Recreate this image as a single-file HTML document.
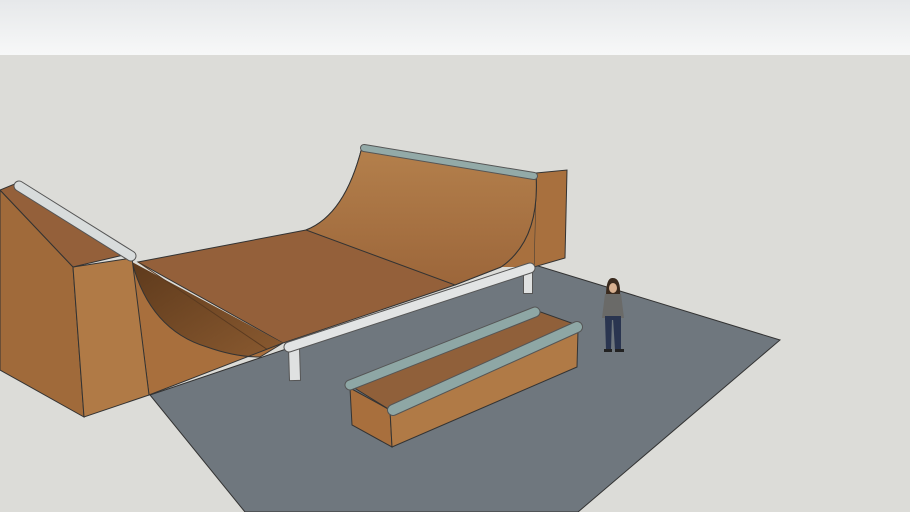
<html><head><style>body{margin:0;width:910px;height:512px;overflow:hidden}</style></head><body>
<svg width="910" height="512" viewBox="0 0 910 512" xmlns="http://www.w3.org/2000/svg">
<defs>
<linearGradient id="sky" x1="0" y1="0" x2="0" y2="1"><stop offset="0" stop-color="#e6e8ea"/><stop offset="1" stop-color="#f7f8f8"/></linearGradient>
<linearGradient id="lc" x1="0" y1="0" x2="1" y2="1"><stop offset="0" stop-color="#5e3a1c"/><stop offset="1" stop-color="#8a5a30"/></linearGradient>
<linearGradient id="rc" x1="0" y1="0" x2="0" y2="1"><stop offset="0" stop-color="#b4804c"/><stop offset="1" stop-color="#9c663a"/></linearGradient>
</defs>
<rect width="910" height="55" fill="url(#sky)"/>
<rect y="55" width="910" height="457" fill="#dcdcd8"/>
<polygon points="150,395 535,265 780,340 578,512 245,512" fill="#6f777e" stroke="#333" stroke-width="1"/>
<!-- back tower -->
<polygon points="536,173 567,170 565,258 534,267" fill="#a8703e" stroke="#333" stroke-width="1"/>
<!-- right side panel under curve -->
<path d="M536,175 L534,267 L501,267 Q540,240 536,175 Z" fill="#a8703e"/>
<!-- ramp floor + transitions -->
<path d="M138,262 L306,230 Q345,215 362,147 L536,175 Q540,240 501,267 L455,285 L283,343 Z" fill="#94603a" stroke="#333" stroke-width="1"/>
<path d="M306,230 Q345,215 362,147 L536,175 Q540,240 501,267 L455,285 Z" fill="url(#rc)" stroke="#333" stroke-width="1"/>
<path d="M132,262 Q150,330 207,347 Q235,357 260,357 L283,343 Z" fill="url(#lc)"/>
<line x1="138" y1="262" x2="268" y2="350" stroke="#5a3a20" stroke-width="1"/>
<!-- side panel -->
<path d="M132,262 Q150,330 207,347 Q235,357 260,357 L283,343 L149,395 Z" fill="#a86f3d" stroke="#333" stroke-width="1"/>
<!-- left tower -->
<polygon points="0,190 73,267 84,417 0,370" fill="#a06a3a" stroke="#333" stroke-width="1"/>
<polygon points="73,267 132,258 149,395 84,417" fill="#b07a46" stroke="#333" stroke-width="1"/>
<polygon points="0,190 17,183 132,253 73,267" fill="#94603a" stroke="#333" stroke-width="1"/>
<line x1="19" y1="186" x2="131" y2="256" stroke="#555" stroke-width="11" stroke-linecap="round"/>
<line x1="19" y1="186" x2="131" y2="256" stroke="#d8dcdc" stroke-width="9" stroke-linecap="round"/>
<!-- coping right -->
<line x1="364" y1="148" x2="534" y2="176" stroke="#555" stroke-width="8" stroke-linecap="round"/>
<line x1="364" y1="148" x2="534" y2="176" stroke="#93aaa8" stroke-width="6" stroke-linecap="round"/>
<!-- grind rail -->
<line x1="528" y1="268" x2="528" y2="294" stroke="#555" stroke-width="10"/>
<line x1="528" y1="268" x2="528" y2="293" stroke="#dfe1e1" stroke-width="8"/>
<line x1="294" y1="348" x2="295" y2="381" stroke="#555" stroke-width="12"/>
<line x1="294" y1="348" x2="295" y2="380" stroke="#dfe1e1" stroke-width="10"/>
<line x1="289" y1="347" x2="530" y2="268" stroke="#555" stroke-width="11" stroke-linecap="round"/>
<line x1="289" y1="347" x2="530" y2="268" stroke="#e2e4e4" stroke-width="9" stroke-linecap="round"/>
<!-- box -->
<polygon points="350,388 390,410 392,447 352,425" fill="#a86f3d" stroke="#333" stroke-width="1"/>
<polygon points="390,410 578,330 577,367 392,447" fill="#b07a46" stroke="#333" stroke-width="1"/>
<polygon points="348,384 535,310 580,326 390,410" fill="#90603a" stroke="#333" stroke-width="1"/>
<line x1="350" y1="385" x2="535" y2="312" stroke="#555" stroke-width="11" stroke-linecap="round"/>
<line x1="350" y1="385" x2="535" y2="312" stroke="#8ea7a5" stroke-width="9" stroke-linecap="round"/>
<line x1="393" y1="410" x2="577" y2="327" stroke="#555" stroke-width="12" stroke-linecap="round"/>
<line x1="393" y1="410" x2="577" y2="327" stroke="#8ea7a5" stroke-width="10" stroke-linecap="round"/>
<!-- person -->
<path d="M606,296 Q606,277 613,278 Q621,278 620,296 Z" fill="#3a2a1e"/>
<ellipse cx="613" cy="288" rx="4" ry="5" fill="#d8b090"/>
<path d="M605,294 L621,294 L624,318 L602,318 Z" fill="#6a6a68"/>
<rect x="605" y="316" width="16" height="4" fill="#2a3550"/>
<path d="M605,318 L612,318 L611,350 L606,350 Z M613,318 L621,318 L621,350 L615,350 Z" fill="#2a3550"/>
<rect x="604" y="349" width="8" height="3" fill="#222"/><rect x="615" y="349" width="9" height="3" fill="#222"/>
</svg>
</body></html>
